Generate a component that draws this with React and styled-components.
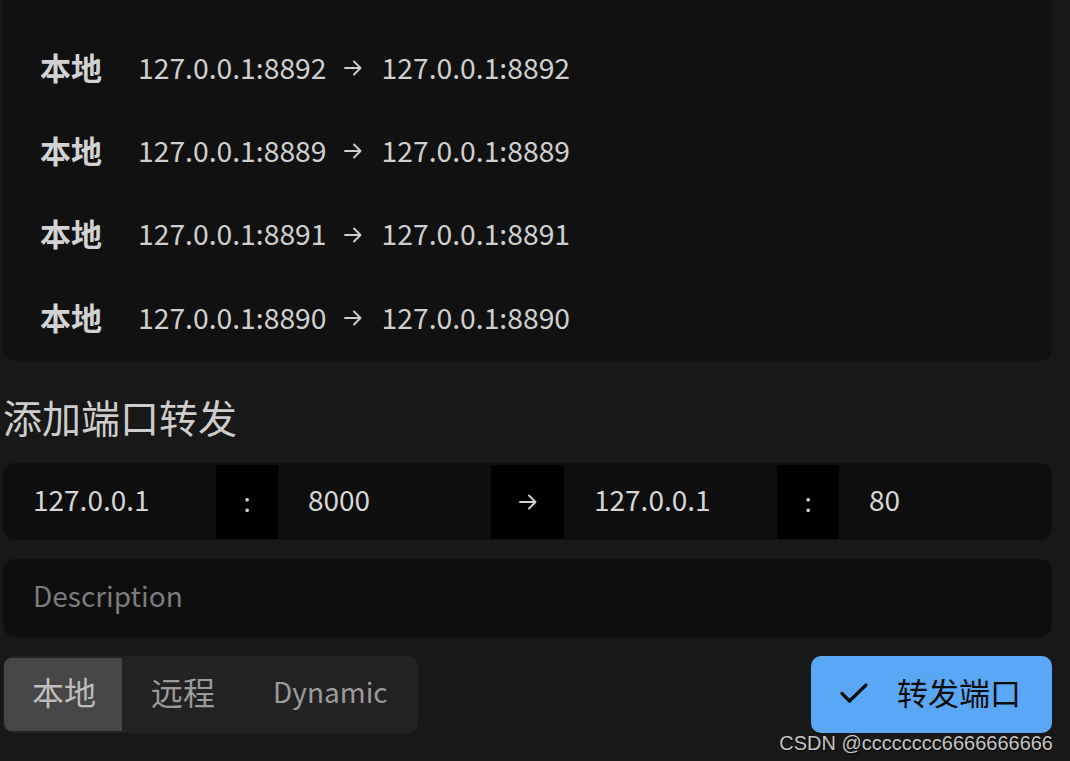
import React from "react";
import styled, { createGlobalStyle } from "styled-components";

const Global = createGlobalStyle`
  html, body { margin: 0; padding: 0; background: #181818; }
  body { font-family: "Noto Sans CJK SC", "Noto Sans", sans-serif; }
  * { box-sizing: border-box; }
`;

const Page = styled.div`
  position: relative;
  width: 1070px;
  height: 761px;
  overflow: hidden;
  background: #181818;
`;

const Content = styled.div`
  width: 1052px;
  padding-left: 3px;
  margin-top: -30px;
`;

const Card = styled.div`
  background: #111111;
  border-radius: 12px;
  padding-top: 57.5px;
  display: flex;
  flex-direction: column;
`;

const Row = styled.div`
  height: 83.33px;
  display: flex;
  align-items: center;
  padding-left: 37px;
  padding-bottom: 6px;
  color: #cfcfcf;
  font-size: 28.3px;
`;

const Kind = styled.span`
  font-weight: 700;
  font-size: 31px;
  margin-right: 36px;
  color: #d2d2d2;
`;

const Addr = styled.span`
  letter-spacing: 0;
`;

const ArrowBox = styled.span`
  display: flex;
  align-items: center;
  margin: 4px 20px 0 17px;
`;

const Heading = styled.h2`
  margin: 27px 0 19px;
  font-size: 39px;
  line-height: 56px;
  font-weight: 400;
  color: #cdcdcd;
`;

const InputRow = styled.div`
  height: 77px;
  padding: 2px 0 1px;
  background: #0e0e0e;
  border-radius: 12px;
  display: grid;
  grid-template-columns: 213px 62px 213px 73px 213px 62px 1fr;
`;

const Field = styled.div`
  display: flex;
  align-items: center;
  padding-left: 30px;
  padding-bottom: 5px;
  font-size: 28px;
  color: #d6d6d6;
`;

const Sep = styled.div`
  background: #000;
  display: flex;
  align-items: center;
  justify-content: center;
  color: #cfcfcf;
  font-size: 26px;
  padding-bottom: ${(p) => (p.$arrow ? "0" : "3px")};
`;

const Description = styled.div`
  margin-top: 19px;
  height: 78px;
  background: #0e0e0e;
  border-radius: 12px;
  display: flex;
  align-items: center;
  padding-left: 30px;
  padding-bottom: 5px;
  font-size: 28px;
  color: #7b7b7b;
`;

const Bottom = styled.div`
  margin-top: 19px;
  height: 77px;
  display: flex;
  justify-content: space-between;
`;

const Tabs = styled.div`
  display: flex;
  background: #222222;
  border-radius: 10px;
  padding: 2px 1px;
`;

const Tab = styled.div`
  display: flex;
  align-items: center;
  padding: ${(p) => (p.$active ? "0 26px 6px 28px" : "0 29px 6px")};
  font-size: ${(p) => (p.$latin ? "28px" : "32px")};
  color: ${(p) => (p.$active ? "#bdbdbd" : "#9a9a9a")};
  background: ${(p) => (p.$active ? "#464646" : "transparent")};
  border-radius: ${(p) => (p.$active ? "8px 0 0 8px" : "0")};
`;

const Button = styled.div`
  width: 241px;
  background: #5aa8f5;
  border-radius: 10px;
  display: flex;
  align-items: center;
  padding-left: 29px;
  padding-bottom: 6px;
  gap: 29px;
  font-size: 31px;
  color: #0b0b0b;
`;

const Watermark = styled.div`
  position: absolute;
  right: 17px;
  bottom: 7px;
  font-family: "Liberation Sans", Arial, sans-serif;
  font-size: 20px;
  line-height: 22px;
  color: #c4c4c4;
  text-shadow: 1px 1px 1px #000;
`;

const CheckWrap = styled.span`
  display: flex;
  margin-top: 4px;
`;

const Check = () => (
  <svg width="28" height="20" viewBox="0 0 28 20" fill="none">
    <path d="M2 10.5 L9.5 18 L26 2" stroke="#0b0b0b" strokeWidth="3.2" strokeLinecap="round" strokeLinejoin="round" />
  </svg>
);

const ArrowIcon = () => (
  <svg width="18" height="16" viewBox="0 0 18 16" fill="none">
    <path d="M1 8 H16.5 M10 1.5 L16.5 8 L10 14.5" stroke="#cfcfcf" strokeWidth="1.9" strokeLinecap="round" strokeLinejoin="round" />
  </svg>
);

const rows = ["8892", "8889", "8891", "8890"];

export default function App() {
  return (
    <Page>
      <Global />
      <Content>
        <Card>
          {rows.map((p) => (
            <Row key={p}>
              <Kind>本地</Kind>
              <Addr>127.0.0.1:{p}</Addr>
              <ArrowBox>
                <ArrowIcon />
              </ArrowBox>
              <Addr>127.0.0.1:{p}</Addr>
            </Row>
          ))}
        </Card>
        <Heading>添加端口转发</Heading>
        <InputRow>
          <Field>127.0.0.1</Field>
          <Sep>:</Sep>
          <Field>8000</Field>
          <Sep $arrow>
            <ArrowIcon />
          </Sep>
          <Field>127.0.0.1</Field>
          <Sep>:</Sep>
          <Field>80</Field>
        </InputRow>
        <Description>Description</Description>
        <Bottom>
          <Tabs>
            <Tab $active>本地</Tab>
            <Tab>远程</Tab>
            <Tab $latin>Dynamic</Tab>
          </Tabs>
          <Button>
            <CheckWrap>
              <Check />
            </CheckWrap>
            <span>转发端口</span>
          </Button>
        </Bottom>
      </Content>
      <Watermark>CSDN @cccccccc6666666666</Watermark>
    </Page>
  );
}
